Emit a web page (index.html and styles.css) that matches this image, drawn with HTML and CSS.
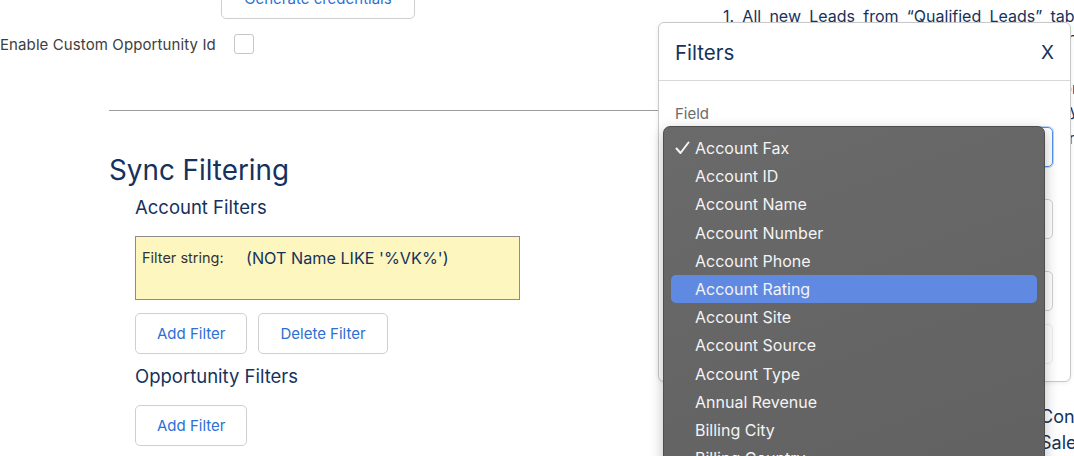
FILE: index.html
```html
<!DOCTYPE html>
<html>
<head>
<meta charset="utf-8">
<link rel="stylesheet" href="styles.css">
</head>
<body>
<div class="page">
  <div class="left">
    <div class="creds-row"><button class="btn creds">Generate credentials</button></div>
    <div class="opt-row"><span class="opt-label">Enable Custom Opportunity Id</span><span class="checkbox"></span></div>
    <div class="divider"></div>
    <section class="sync">
      <h2 class="sync-title">Sync Filtering</h2>
      <div class="sync-body">
        <h3 class="sub-title">Account Filters</h3>
        <div class="filter-box"><span class="fs-label">Filter string:</span><span class="fs-value">(NOT Name LIKE '%VK%')</span></div>
        <div class="btns"><button class="btn">Add Filter</button><button class="btn">Delete Filter</button></div>
        <h3 class="sub-title opp">Opportunity Filters</h3>
        <div class="btns last"><button class="btn">Add Filter</button></div>
      </div>
    </section>
  </div>
  <div class="right">
    <div class="rlist">
      <p class="rp">1. All new Leads from “Qualified Leads” tab will be synced with Salesforce as new Accounts and Opportunities</p>
      <p class="rp">2. Leads are matched by domain and custom fields are updated with the values from the source system</p>
      <p class="rp">3. Deleted records remain in Salesforce until removed manually by the administrator of the org</p>
      <p class="rp">4. Filters narrow down records which will be synced; only records which match all rules are synced</p>
    </div>
    <div class="notes">
      <span class="note-l">Note</span><span class="note-r">Considered</span>
      <span class="note-l">Note</span><span class="note-r">Sales</span>
    </div>
  </div>
</div>

<div class="modal">
  <div class="modal-head"><span class="modal-title">Filters</span><span class="modal-x">X</span></div>
  <div class="modal-body">
    <div class="field-label">Field</div>
    <div class="input focus"></div>
    <div class="input mid"></div>
    <div class="input mid2"></div>
    <div class="input faint"></div>
  </div>
</div>

<div class="menu">
  <div class="mi"><svg class="check" width="15" height="14" viewBox="0 0 15 14"><path d="M1.5 7.5 L5.5 12 L13.5 1.5" fill="none" stroke="#f4f4f4" stroke-width="2" stroke-linecap="round" stroke-linejoin="round"/></svg>Account Fax</div>
  <div class="mi">Account ID</div>
  <div class="mi">Account Name</div>
  <div class="mi">Account Number</div>
  <div class="mi">Account Phone</div>
  <div class="mi sel">Account Rating</div>
  <div class="mi">Account Site</div>
  <div class="mi">Account Source</div>
  <div class="mi">Account Type</div>
  <div class="mi">Annual Revenue</div>
  <div class="mi">Billing City</div>
  <div class="mi">Billing Country</div>
</div>
</body>
</html>
```

FILE: styles.css
```css
* { box-sizing: border-box; }
html, body { margin: 0; padding: 0; }
body {
  width: 1074px;
  height: 456px;
  overflow: hidden;
  background: #fff;
  font-family: Inter, "Noto Sans", sans-serif;
  position: relative;
}
.page {
  display: grid;
  grid-template-columns: 715px 420px;
  margin-top: -22px;
}
.left { display: flex; flex-direction: column; }
.creds-row { padding-left: 221px; }
.btn {
  font-family: Inter, "Noto Sans", sans-serif;
  font-size: 15px;
  color: #2d6fd4;
  background: #fff;
  border: 1px solid #cfcfcf;
  border-radius: 5px;
  height: 41px;
  padding: 0 21px;
  line-height: 39px;
}
.creds { width: 194px; padding: 0; }
.opt-row {
  display: flex;
  align-items: center;
  margin-top: 15px;
  height: 20px;
}
.opt-label {
  font-size: 15px;
  color: #3e3e3c;
  width: 234px;
  letter-spacing: 0.1px;
}
.checkbox {
  width: 20px;
  height: 20px;
  border: 1px solid #c6c6c6;
  border-radius: 3px;
  background: #fff;
}
.divider {
  margin: 56px 0 0 109px;
  height: 1px;
  background: #9b9b9b;
}
.sync { padding-left: 109px; }
.sync-title {
  margin: 41px 0 0;
  font-size: 27.8px;
  line-height: 36px;
  font-weight: 400;
  color: #16325c;
}
.sync-body { padding-left: 26px; }
.sub-title {
  margin: 7px 0 0;
  font-size: 18.5px;
  line-height: 24px;
  font-weight: 400;
  color: #16325c;
}
.sub-title.opp { margin-top: 10px; }
.filter-box {
  margin-top: 17px;
  width: 385px;
  height: 64px;
  background: #fdf7bf;
  border: 1px solid #8c8c8c;
  padding: 11px 0 0 6px;
  display: flex;
  align-items: flex-start;
  line-height: 20px;
}
.fs-label { font-size: 14.5px; color: #333; width: 104px; }
.fs-value { font-size: 16.2px; color: #16325c; }
.btns { display: flex; gap: 11px; margin-top: 13px; }
.btns.last { margin-top: 17px; }

.right { padding: 27px 0 0 8px; }
.rlist { height: 346px; overflow: hidden; }
.rp {
  margin: 0 0 6px;
  font-size: 16px;
  line-height: 22px;
  color: #16325c;
  text-align: justify;
}
.notes {
  margin-top: 55px;
  display: grid;
  grid-template-columns: 317px 1fr;
  row-gap: 4px;
  font-size: 18px;
  line-height: 22px;
  color: #16325c;
}

.modal {
  position: absolute;
  left: 658px;
  top: 22px;
  width: 413px;
  height: 360px;
  background: #fff;
  border: 1px solid #c9c9c9;
  border-radius: 6px;
  box-shadow: 0 1px 4px rgba(0,0,0,0.08);
}
.modal-head {
  height: 58px;
  border-bottom: 1px solid #d8d8d8;
  display: flex;
  align-items: center;
  justify-content: space-between;
  padding: 1px 16px 0 16px;
}
.modal-title { font-size: 20.5px; color: #16325c; }
.modal-x { font-size: 19px; color: #16325c; }
.modal-body { padding: 23px 17px 0 16px; }
.field-label { font-size: 15px; color: #6b6b6b; line-height: 20px; }
.input {
  height: 40px;
  border: 1px solid #d0d0d0;
  border-radius: 5px;
  margin-top: 32px;
}
.input.focus { margin-top: 3px; border-color: #4f90ee; box-shadow: 0 0 0 1px rgba(79,144,238,0.35); }
.input.mid2 { margin-top: 32px; }
.input.faint { margin-top: 13px; border-color: #ececec; }

.menu {
  position: absolute;
  left: 663px;
  top: 126px;
  width: 382px;
  height: 360px;
  background: linear-gradient(160deg, #6a6a6a, #616161);
  border: 1px solid #4e4e4e;
  border-radius: 7px;
  padding-top: 7px;
  box-shadow: 0 4px 14px rgba(0,0,0,0.25);
}
.mi {
  position: relative;
  height: 28.2px;
  line-height: 28.2px;
  margin: 0 7px 0 7px;
  padding-left: 24px;
  border-radius: 5px;
  font-size: 16px;
  color: #f4f4f4;
  font-family: Inter, "Noto Sans", sans-serif;
}
.mi.sel { background: #6089e1; }
.check {
  position: absolute;
  left: 4px;
  top: 7px;
}
```
